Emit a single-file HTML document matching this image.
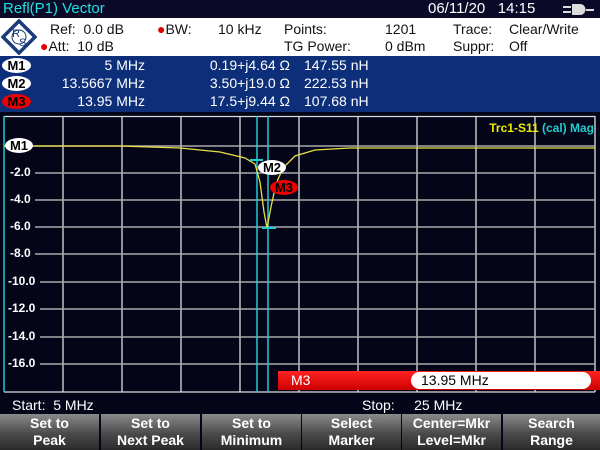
<!DOCTYPE html>
<html><head><meta charset="utf-8"><style>
*{margin:0;padding:0;box-sizing:border-box}
body{width:600px;height:450px;overflow:hidden;background:#05051a;font-family:"Liberation Sans",sans-serif;position:relative}
.a{position:absolute;white-space:nowrap}
#title{left:0;top:0;width:600px;height:18px;background:#0a0a28;color:#22e0e0;font-size:15px;line-height:18px}
#info{left:0;top:18px;width:600px;height:38px;background:#fff;color:#111;font-size:14px}
#mk{left:0;top:56px;width:600px;height:56px;background:#0d2f7a;color:#fff;font-size:14px}
.btn{position:absolute;top:414px;width:99px;height:36px;background:linear-gradient(#8a8a8a,#4a4a4a 55%,#2a2a2a);color:#fff;font-size:14px;line-height:17px;text-align:center;font-weight:bold;padding-top:1px}
.oval{position:absolute;border-radius:50%;font-weight:bold;font-size:13px;text-align:center;line-height:15px}
</style></head><body>
<div id="title" class="a"><span class="a" style="left:3px">Refl(P1) Vector</span><span class="a" style="left:428px;color:#fff">06/11/20&nbsp;&nbsp;&nbsp;14:15</span>
<svg class="a" style="left:560px;top:3px" width="36" height="13"><rect x="3" y="3" width="8" height="2" fill="#ddd"/><rect x="3" y="8" width="8" height="2" fill="#ddd"/><path d="M12 1h8a5.5 5.5 0 0 1 0 11h-8z" fill="#ddd"/><rect x="26" y="6" width="8" height="2" fill="#ddd"/></svg></div>
<div id="info" class="a">
<svg class="a" style="left:1px;top:1px" width="36" height="36"><path d="M18 2L34 18L18 34L2 18Z" fill="none" stroke="#1a3a7a" stroke-width="3.5"/><circle cx="18" cy="18" r="7" fill="none" stroke="#1a3a7a" stroke-width="1"/><text x="11" y="18" font-size="11" fill="#1a3a7a" font-family="Liberation Sans">R</text><text x="18" y="27" font-size="11" fill="#1a3a7a" font-family="Liberation Sans">S</text></svg>
<span class="a" style="left:50px;top:3px">Ref:&nbsp;&nbsp;0.0 dB</span>
<span class="a" style="left:40px;top:20px"><span style="color:#d00">●</span>Att:&nbsp;&nbsp;10 dB</span>
<span class="a" style="left:157px;top:3px"><span style="color:#d00">●</span>BW:</span>
<span class="a" style="left:218px;top:3px">10 kHz</span>
<span class="a" style="left:284px;top:3px">Points:</span><span class="a" style="left:385px;top:3px">1201</span>
<span class="a" style="left:284px;top:20px">TG Power:</span><span class="a" style="left:385px;top:20px">0 dBm</span>
<span class="a" style="left:453px;top:3px">Trace:</span><span class="a" style="left:509px;top:3px">Clear/Write</span>
<span class="a" style="left:453px;top:20px">Suppr:</span><span class="a" style="left:509px;top:20px">Off</span>
</div>
<div id="mk" class="a">
<div class="oval" style="left:2px;top:2px;width:29px;height:15px;background:#fff;color:#000">M1</div>
<div class="oval" style="left:2px;top:20px;width:29px;height:15px;background:#fff;color:#000">M2</div>
<div class="oval" style="left:2px;top:38px;width:29px;height:15px;background:#e00;color:#000">M3</div>
<span class="a" style="right:455px;top:1px">5 MHz</span>
<span class="a" style="right:455px;top:19px">13.5667 MHz</span>
<span class="a" style="right:455px;top:37px">13.95 MHz</span>
<span class="a" style="right:310px;top:1px">0.19+j4.64 Ω</span>
<span class="a" style="right:310px;top:19px">3.50+j19.0 Ω</span>
<span class="a" style="right:310px;top:37px">17.5+j9.44 Ω</span>
<span class="a" style="left:304px;top:1px">147.55 nH</span>
<span class="a" style="left:304px;top:19px">222.53 nH</span>
<span class="a" style="left:304px;top:37px">107.68 nH</span>
</div>
<svg class="a" style="left:0;top:112px" width="600" height="284" font-family="Liberation Sans" font-weight="bold">
<g stroke="#ddd" stroke-width="1.3">
<line x1="4" y1="4.5" x2="595" y2="4.5"/><line x1="595" y1="4" x2="595" y2="280"/><line x1="4" y1="280" x2="595" y2="280"/>
<line x1="63" y1="4" x2="63" y2="280"/><line x1="122" y1="4" x2="122" y2="280"/><line x1="181" y1="4" x2="181" y2="280"/><line x1="240" y1="4" x2="240" y2="280"/><line x1="299" y1="4" x2="299" y2="280"/><line x1="358" y1="4" x2="358" y2="280"/><line x1="417" y1="4" x2="417" y2="280"/><line x1="476" y1="4" x2="476" y2="280"/><line x1="535" y1="4" x2="535" y2="280"/>
</g>
<g stroke="#aaa" stroke-width="1.5">
<line x1="4" y1="34" x2="595" y2="34"/>
<line x1="35" y1="61" x2="595" y2="61"/><line x1="35" y1="88" x2="595" y2="88"/><line x1="35" y1="115" x2="595" y2="115"/><line x1="35" y1="142" x2="595" y2="142"/><line x1="40" y1="170" x2="595" y2="170"/><line x1="40" y1="197" x2="595" y2="197"/><line x1="40" y1="225" x2="595" y2="225"/><line x1="40" y1="252" x2="595" y2="252"/>
</g>
<line x1="4" y1="4" x2="4" y2="280" stroke="#2cc" stroke-width="1.5"/>
<line x1="257" y1="4" x2="257" y2="280" stroke="#2cc" stroke-width="1.5"/>
<line x1="268" y1="4" x2="268" y2="280" stroke="#2cc" stroke-width="1.5"/>
<g fill="#fff" font-size="12">
<text x="10" y="64">-2.0</text><text x="10" y="91">-4.0</text><text x="10" y="118">-6.0</text><text x="10" y="145">-8.0</text><text x="8" y="173">-10.0</text><text x="8" y="200">-12.0</text><text x="8" y="228">-14.0</text><text x="8" y="255">-16.0</text>
</g>
<path d="M4 34 L120 34 L180 36 L220 40 L245 46 L255 52 L260 70 L264 100 L267 116 L271 95 L276 72 L283 56 L295 44 L315 38 L350 36 L595 36" fill="none" stroke="#e8e040" stroke-width="1.3"/>
<line x1="250" y1="48" x2="263" y2="48" stroke="#2cc" stroke-width="2"/>
<line x1="262" y1="116" x2="276" y2="116" stroke="#2cc" stroke-width="2"/>
<text x="594" y="20" font-size="12" text-anchor="end"><tspan fill="#ee0">Trc1-S11 </tspan><tspan fill="#2cc">(cal) Mag</tspan></text>
</svg>
<div class="oval" style="left:5px;top:138px;width:28px;height:15px;background:#fff;color:#000">M1</div>
<div class="oval" style="left:258px;top:160px;width:28px;height:15px;background:#fff;color:#000">M2</div>
<div class="oval" style="left:270px;top:180px;width:28px;height:15px;background:#e00;color:#000">M3</div>
<div class="a" style="left:278px;top:371px;width:322px;height:19px;background:linear-gradient(#f22,#c00);color:#fff;font-size:14px;line-height:19px;padding-left:13px">M3</div>
<div class="a" style="left:411px;top:372px;width:180px;height:17px;background:#fff;border-radius:9px;color:#000;font-size:14px;line-height:17px;padding-left:10px">13.95 MHz</div>
<div class="a" style="left:12px;top:397px;color:#fff;font-size:14px">Start:&nbsp;&nbsp;5 MHz</div>
<div class="a" style="left:362px;top:397px;color:#fff;font-size:14px">Stop:&nbsp;&nbsp;&nbsp;&nbsp;&nbsp;25 MHz</div>
<div class="btn" style="left:0">Set to<br>Peak</div>
<div class="btn" style="left:101px">Set to<br>Next Peak</div>
<div class="btn" style="left:202px">Set to<br>Minimum</div>
<div class="btn" style="left:302px">Select<br>Marker</div>
<div class="btn" style="left:402px">Center=Mkr<br>Level=Mkr</div>
<div class="btn" style="left:503px;width:97px">Search<br>Range</div>
</body></html>
